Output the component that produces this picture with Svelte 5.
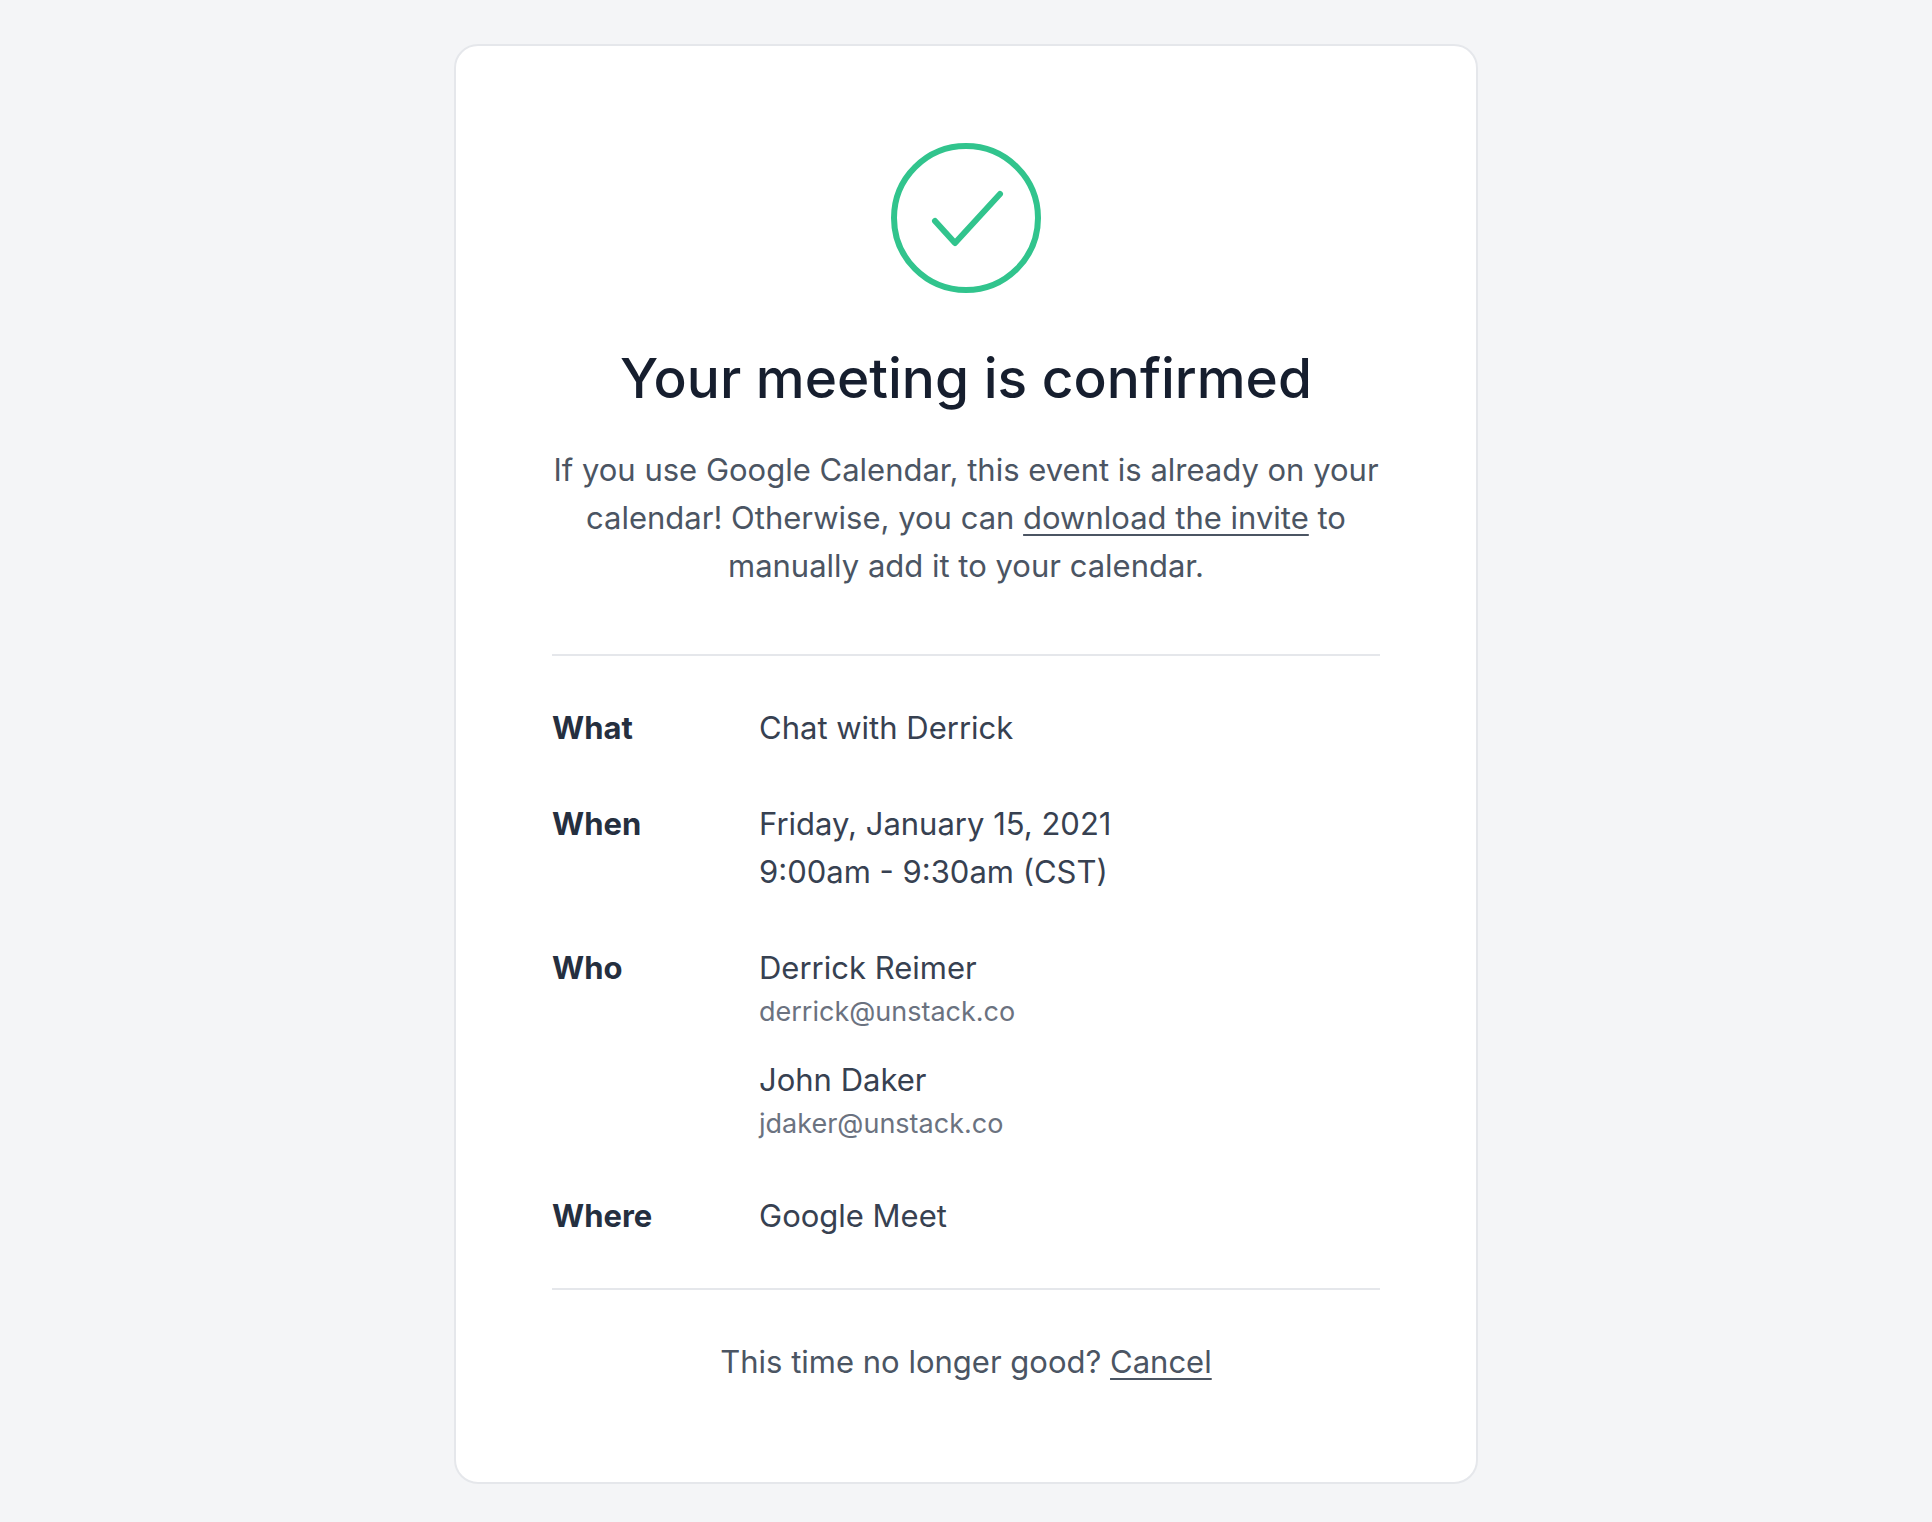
<script>
  const attendees = [
    { name: "Derrick Reimer", email: "derrick@unstack.co" },
    { name: "John Daker", email: "jdaker@unstack.co" },
  ];
</script>

<main class="page">
  <section class="card">
    <header class="intro">
      <svg class="check" viewBox="-1 -1 152 152" aria-hidden="true">
        <circle cx="75" cy="75" r="72" />
        <path d="M44 78 L64 100 L109 51" />
      </svg>
      <h1>Your meeting is confirmed</h1>
      <p>
        If you use Google Calendar, this event is already on your calendar! Otherwise, you can
        <a href="#invite">download the invite</a> to manually add it to your calendar.
      </p>
    </header>

    <dl class="details">
      <dt>What</dt>
      <dd>Chat with Derrick</dd>

      <dt>When</dt>
      <dd>
        <div>Friday, January 15, 2021</div>
        <div>9:00am - 9:30am (CST)</div>
      </dd>

      <dt>Who</dt>
      <dd class="people">
        {#each attendees as person}
          <div>
            <div>{person.name}</div>
            <div class="email">{person.email}</div>
          </div>
        {/each}
      </dd>

      <dt>Where</dt>
      <dd>Google Meet</dd>
    </dl>

    <footer>This time no longer good? <a href="#cancel">Cancel</a></footer>
  </section>
</main>

<style>
  :global(body) {
    background: #f4f5f7;
  }

  .page {
    padding: 44px 32px 38px;
    font-family: Inter, "Liberation Sans", sans-serif;
    font-size: 31px;
    line-height: 48px;
    color: #4b5563;
  }

  .card {
    box-sizing: border-box;
    max-width: 1024px;
    margin: 0 auto;
    padding: 96px;
    background: #fff;
    border: 2px solid #e5e7eb;
    border-radius: 24px;
  }

  .intro {
    text-align: center;
    padding-bottom: 64px;
  }

  .check {
    display: block;
    width: 152px;
    height: 152px;
    margin: 0 auto 48px;
    fill: none;
    stroke: #31c48d;
    stroke-width: 6;
    stroke-linecap: round;
    stroke-linejoin: round;
  }

  h1 {
    margin: 0 0 32px;
    font-size: 55px;
    line-height: 72px;
    font-weight: 500;
    color: #161e2e;
  }

  p {
    margin: 0;
  }

  a {
    color: inherit;
    text-underline-offset: 5px;
    text-decoration-thickness: 2px;
    text-decoration-skip-ink: none;
  }

  .details {
    display: grid;
    grid-template-columns: 1fr 3fr;
    row-gap: 48px;
    margin: 0;
    padding: 48px 0;
    border-top: 2px solid #e5e7eb;
    border-bottom: 2px solid #e5e7eb;
  }

  dt {
    font-weight: 700;
    color: #252f3f;
  }

  dd {
    margin: 0;
    color: #374151;
  }

  .people {
    display: grid;
    gap: 24px;
  }

  .email {
    font-size: 27px;
    line-height: 40px;
    color: #6b7280;
  }

  footer {
    padding-top: 48px;
    text-align: center;
  }
</style>
